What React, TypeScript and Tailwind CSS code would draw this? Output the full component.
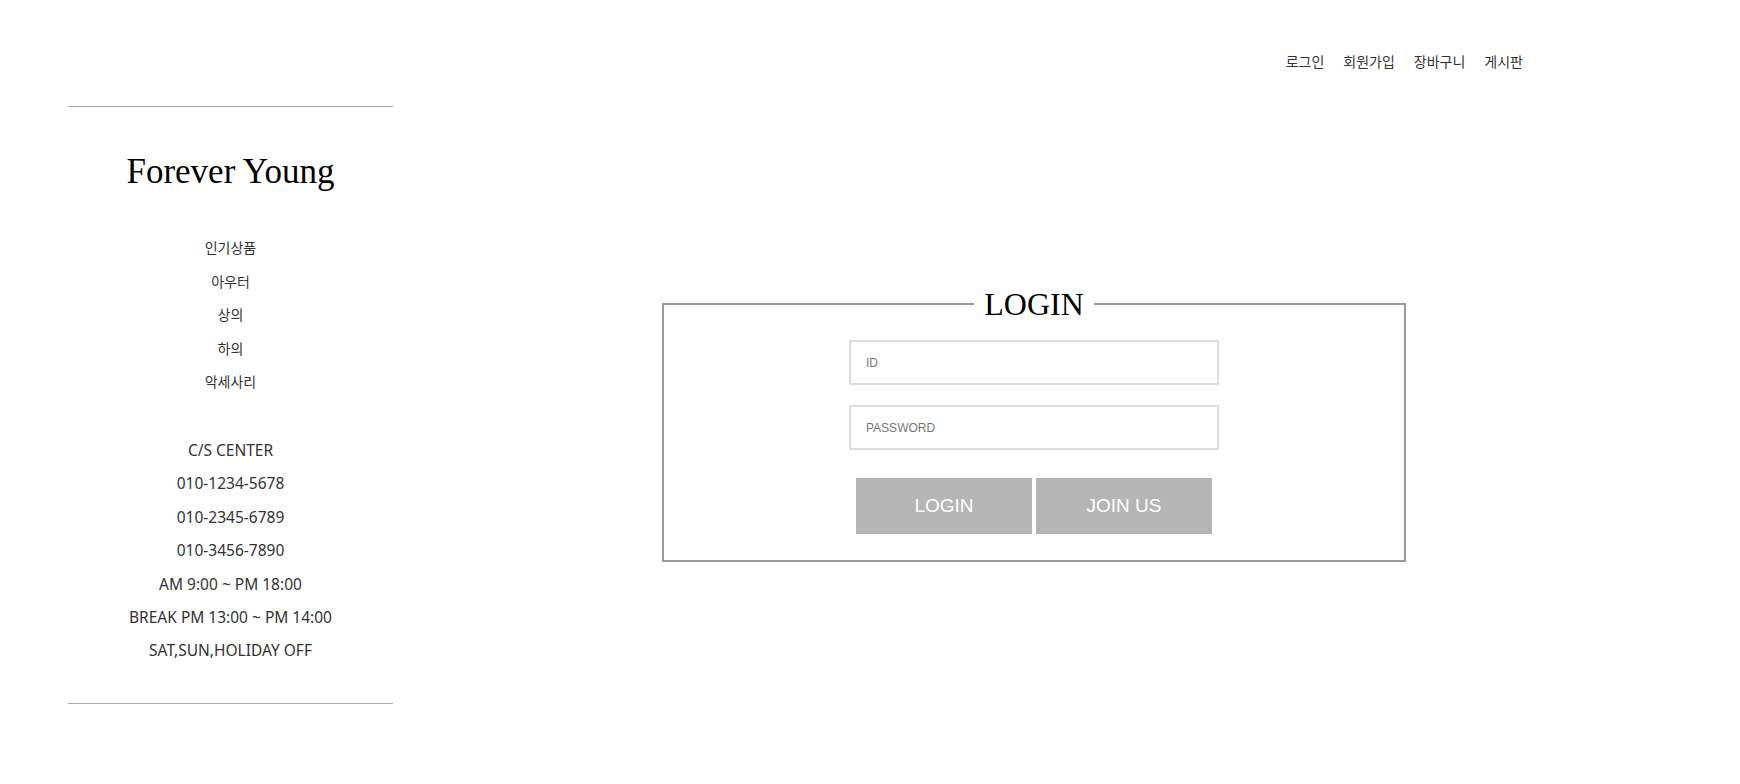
const topLinks = ["로그인", "회원가입", "장바구니", "게시판"];
const categories = ["인기상품", "아우터", "상의", "하의", "악세사리"];
const csLines = [
  "C/S CENTER",
  "010-1234-5678",
  "010-2345-6789",
  "010-3456-7890",
  "AM 9:00 ~ PM 18:00",
  "BREAK PM 13:00 ~ PM 14:00",
  "SAT,SUN,HOLIDAY OFF",
];

const kr = "font-['Noto_Sans_CJK_KR','Noto_Sans',sans-serif]";

export default function App() {
  return (
    <div className="w-full h-[784px] bg-white text-[#222]">
      <header className="h-[106px] flex justify-end pr-[217px] pt-[51px]">
        <ul className={`flex gap-[19px] text-[14px] leading-[20px] text-[#333] ${kr}`}>
          {topLinks.map((t) => (
            <li key={t}>{t}</li>
          ))}
        </ul>
      </header>

      <div className="flex">
        <aside className="ml-[68px] w-[325px] border-t border-b border-[#aaa] flex flex-col items-center pt-[40px] pb-[35px]">
          <h1 className="font-['Liberation_Serif',serif] text-[35px] leading-[50px] text-black">
            Forever Young
          </h1>
          <ul className={`mt-[34px] flex flex-col items-center text-[14px] leading-[33.6px] text-[#333] ${kr}`}>
            {categories.map((c) => (
              <li key={c}>{c}</li>
            ))}
          </ul>
          <ul className="mt-[35px] flex flex-col items-center font-['Noto_Sans',sans-serif] text-[15.5px] leading-[33.4px] text-[#333]">
            {csLines.map((l) => (
              <li key={l}>{l}</li>
            ))}
          </ul>
        </aside>

        <main className="ml-[269px] mt-[180px]">
          <fieldset className="w-[744px] border-2 border-[#9a9a9a] flex flex-col items-center pb-[26px]">
            <legend className="mx-auto px-[10px] font-['Liberation_Serif',serif] text-[32px] leading-[36px] text-black">
              LOGIN
            </legend>
            <input
              type="text"
              placeholder="ID"
              className="mt-[18px] w-[370px] h-[45px] border-2 border-[#ddd] px-[15px] text-[12px] font-['Liberation_Sans',sans-serif] placeholder:text-[#777] outline-none"
            />
            <input
              type="password"
              placeholder="PASSWORD"
              className="mt-[20px] w-[370px] h-[45px] border-2 border-[#ddd] px-[15px] text-[12px] font-['Liberation_Sans',sans-serif] placeholder:text-[#777] outline-none"
            />
            <div className="mt-[28px] flex gap-[4px]">
              <button className="w-[176px] h-[56px] bg-[#b5b5b5] text-white text-[19px] font-['Liberation_Sans',sans-serif]">
                LOGIN
              </button>
              <button className="w-[176px] h-[56px] bg-[#b5b5b5] text-white text-[19px] font-['Liberation_Sans',sans-serif]">
                JOIN US
              </button>
            </div>
          </fieldset>
        </main>
      </div>
    </div>
  );
}
